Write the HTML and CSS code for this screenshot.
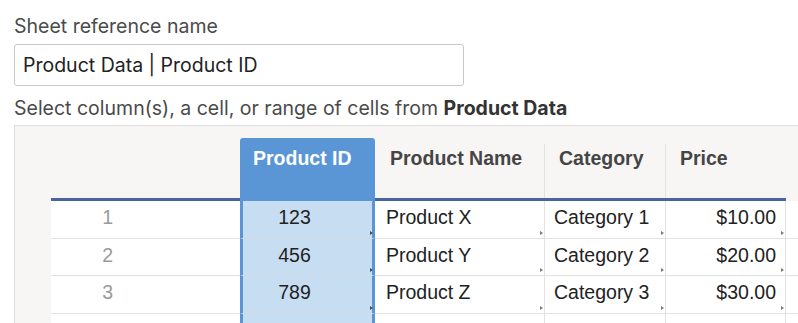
FILE: index.html
```html
<!DOCTYPE html>
<html lang="en">
<head>
    <meta charset="UTF-8">
    <meta name="viewport" content="width=device-width, initial-scale=1.0">
    <title>Sheet reference</title>
    <link rel="stylesheet" href="styles.css">
</head>
<body>
    <div class="panel">
        <label class="field-label" for="ref-name">Sheet reference name</label>
        <input type="text" id="ref-name" class="ref-input" value="Product Data | Product ID">
        <p class="hint">Select column(s), a cell, or range of cells from <b>Product Data</b></p>
        <div class="sheet">
            <div class="sheet-head">
                <div class="gutter"></div>
                <div class="head-cols">
                    <div class="th th-num"></div>
                    <div class="th th-selected">Product ID</div>
                    <div class="th">Product Name</div>
                    <div class="th th-sep">Category</div>
                    <div class="th th-sep">Price</div>
                </div>
                <div class="head-rest"></div>
            </div>
            <div class="sheet-row">
                <div class="gutter"></div>
                <div class="td td-num">1</div>
                <div class="td td-selected">123</div>
                <div class="td td-mark">Product X</div>
                <div class="td td-mark td-line">Category 1</div>
                <div class="td td-mark td-line td-price">$10.00</div>
                <div class="td td-rest"></div>
            </div>
            <div class="sheet-row">
                <div class="gutter"></div>
                <div class="td td-num">2</div>
                <div class="td td-selected">456</div>
                <div class="td td-mark">Product Y</div>
                <div class="td td-mark td-line">Category 2</div>
                <div class="td td-mark td-line td-price">$20.00</div>
                <div class="td td-rest"></div>
            </div>
            <div class="sheet-row">
                <div class="gutter"></div>
                <div class="td td-num">3</div>
                <div class="td td-selected">789</div>
                <div class="td td-mark">Product Z</div>
                <div class="td td-mark td-line">Category 3</div>
                <div class="td td-mark td-line td-price">$30.00</div>
                <div class="td td-rest"></div>
            </div>
            <div class="sheet-row">
                <div class="gutter"></div>
                <div class="td td-num"></div>
                <div class="td td-selected"></div>
                <div class="td"></div>
                <div class="td td-line"></div>
                <div class="td td-line td-price"></div>
                <div class="td td-rest"></div>
            </div>
        </div>
    </div>
</body>
</html>
```

FILE: styles.css
```css
html, body {
    margin: 0;
    padding: 0;
    background: #ffffff;
    overflow: hidden;
}
body {
    font-family: Inter, "Liberation Sans", sans-serif;
    color: #4a4a4a;
    font-size: 19.5px;
}
.panel {
    padding: 14px 0 0 14px;
}
.field-label {
    display: block;
    line-height: 24px;
}
.ref-input {
    display: block;
    box-sizing: border-box;
    width: 450px;
    height: 42px;
    margin: 6px 0 0 0;
    padding: 0 8px;
    border: 1px solid #c9c9c9;
    border-radius: 3px;
    font-family: Inter, "Liberation Sans", sans-serif;
    font-size: 19.5px;
    color: #222222;
    background: #ffffff;
    outline: none;
}
.hint {
    margin: 10px 0 0 0;
    line-height: 24px;
}
.hint b {
    font-weight: 700;
    color: #333333;
}
.sheet {
    box-sizing: border-box;
    margin: 5px -20px 0 0;
    border: 1px solid #dcdcdc;
    border-bottom: none;
    background: #f7f6f5;
    font-family: "Liberation Sans", Arial, sans-serif;
    font-size: 19.5px;
    height: 198px;
    overflow: hidden;
}
.sheet-head,
.sheet-row {
    display: grid;
    grid-template-columns: 36px 735px 1fr;
}
.sheet-row {
    grid-template-columns: 36px 189px 135px 169px 121px 121px 1fr;
    height: 37.5px;
}
.head-cols {
    display: grid;
    grid-template-columns: 189px 135px 169px 121px 121px;
    height: 72px;
    border-bottom: 3px solid #48659f;
    align-items: end;
}
.th {
    box-sizing: border-box;
    height: 54px;
    padding: 2px 0 0 15px;
    line-height: 24px;
    font-weight: 700;
    color: #454545;
}
.th-num {
    padding: 0;
}
.th-sep {
    border-left: 1px solid #e4e3e2;
    padding-left: 14px;
}
.th-selected {
    height: 63px;
    margin-bottom: -3px;
    padding: 8px 0 0 13px;
    background: #5a96d5;
    color: #ffffff;
    border-radius: 3px 3px 0 0;
}
.td {
    position: relative;
    box-sizing: border-box;
    background: #ffffff;
    border-bottom: 1px solid #e2e2e2;
    padding: 4px 0 0 11px;
    line-height: 24px;
    color: #222222;
    white-space: nowrap;
}
.td-num {
    text-align: right;
    padding: 4px 127px 0 0;
    color: #9a9a9a;
}
.td-selected {
    background: #c7ddf2;
    border-left: 3px solid #5a96d5;
    border-right: 3px solid #5a96d5;
    border-bottom-color: #d3dbe4;
    text-align: center;
    padding: 4px 26px 0 0;
}
.td-line {
    border-left: 1px solid #e2e2e2;
    padding-left: 9px;
}
.td-price {
    text-align: right;
    padding-right: 9px;
    border-right: 1px solid #e2e2e2;
}
.td-rest {
    padding: 0;
}
.td-mark::after,
.td-selected::after {
    content: "";
    position: absolute;
    right: 1px;
    bottom: 3px;
    border-top: 2px solid transparent;
    border-bottom: 2px solid transparent;
    border-left: 3px solid #7a7a7a;
}
.sheet-row:last-child .td-selected::after {
    display: none;
}
.td-selected::after {
    right: -1px;
    border-left-color: #4a4f58;
}
```
